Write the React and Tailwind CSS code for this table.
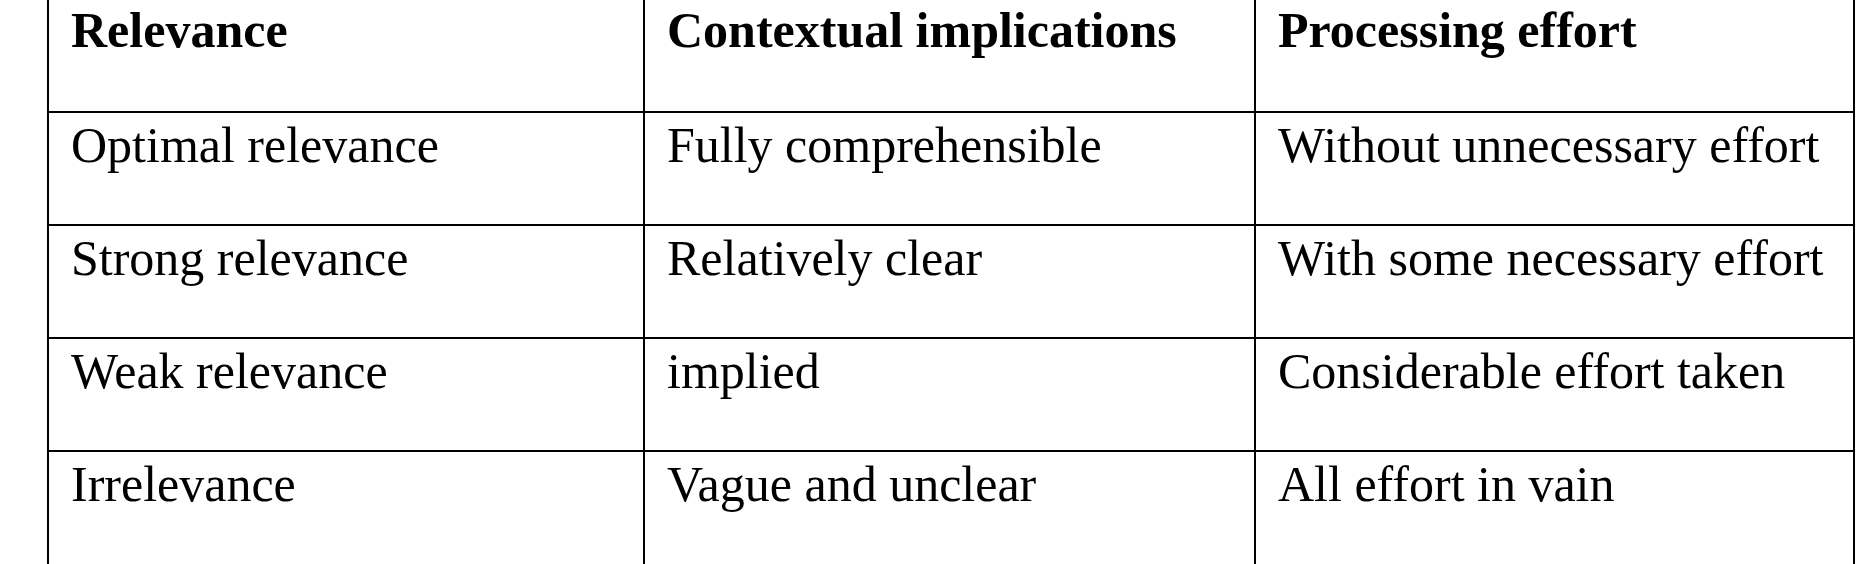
import React from "react";

const rows = [
  ["Relevance", "Contextual implications", "Processing effort"],
  ["Optimal relevance", "Fully comprehensible", "Without unnecessary effort"],
  ["Strong relevance", "Relatively clear", "With some necessary effort"],
  ["Weak relevance", "implied", "Considerable effort taken"],
  ["Irrelevance", "Vague and unclear", "All effort in vain"],
];

export default function App() {
  return (
    <div className="h-[564px] w-[1856px] overflow-hidden bg-white text-black" style={{ fontFamily: '"Liberation Serif", "Times New Roman", serif' }}>
      <div className="ml-[47px] grid w-[1808px] grid-cols-[596px_611px_599px] border-l-2 border-black">
        {rows.map((row, ri) =>
          row.map((cell, ci) => (
            <div
              key={`${ri}-${ci}`}
              className={
                "h-[113px] whitespace-nowrap border-r-2 border-black pl-[22px] text-[50px] leading-[57px] " +
                (ri === 0 ? "pt-[2px] font-bold " : "pt-[4px] ") +
                (ri === rows.length - 1 ? "" : "border-b-2")
              }
            >
              {cell}
            </div>
          ))
        )}
      </div>
    </div>
  );
}
